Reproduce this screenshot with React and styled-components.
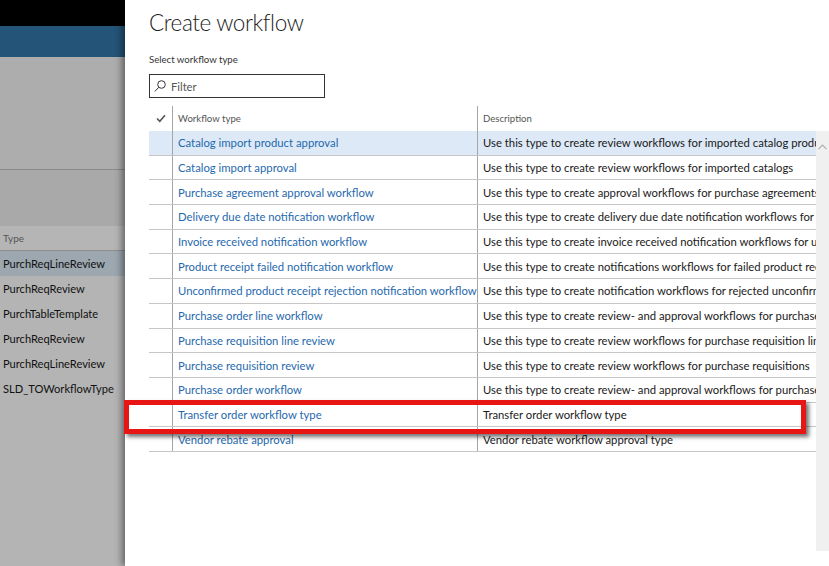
import React from 'react';
import styled, { createGlobalStyle } from 'styled-components';

const GlobalStyle = createGlobalStyle`
  html, body { margin: 0; padding: 0; }
  body {
    width: 829px;
    height: 566px;
    overflow: hidden;
    font-family: "Segoe UI", Lato, "Open Sans", sans-serif;
    background: #b4b4b4;
  }
`;

const Screen = styled.div`
  position: relative;
  display: flex;
  width: 829px;
  height: 566px;
  overflow: hidden;
`;

const Backdrop = styled.div`
  width: 125px;
  flex-shrink: 0;
  display: flex;
  flex-direction: column;
  background: #b4b4b4;
`;

const TopBar = styled.div`
  height: 26px;
  background: #000;
`;

const NavBar = styled.div`
  height: 31px;
  background: #245478;
`;

const GrayBlock = styled.div`
  height: ${p => p.h}px;
  background: ${p => p.bg};
  border-bottom: ${p => (p.line ? '1px solid #8a8a8a' : 'none')};
`;

const BackHeader = styled.div`
  height: 24px;
  line-height: 24px;
  padding-left: 3px;
  font-size: 10px;
  color: #555;
  background: #b5b5b5;
  border-bottom: 1px solid #8e8e8e;
`;

const BackRow = styled.div`
  height: 25px;
  line-height: 25px;
  padding-left: 3px;
  font-size: 11.1px;
  color: #111;
  white-space: nowrap;
  background: ${p => (p.selected ? '#9ca7b0' : 'transparent')};
`;

const Dialog = styled.div`
  flex: 1;
  min-width: 0;
  background: #fff;
  box-shadow: -3px 0 7px rgba(0, 0, 0, 0.45);
  padding: 6px 0 0 24px;
  display: flex;
  flex-direction: column;
  z-index: 1;
`;

const Title = styled.h1`
  margin: 0;
  font-size: 22.5px;
  font-weight: 300;
  letter-spacing: -0.4px;
  color: #222;
  line-height: 34px;
`;

const Label = styled.div`
  margin-top: 14px;
  font-size: 9.6px;
  color: #333;
  line-height: 12px;
`;

const FilterBox = styled.div`
  margin-top: 8px;
  width: 170px;
  height: 22px;
  border: 1px solid #333;
  display: flex;
  align-items: center;
  gap: 5px;
  padding-left: 4px;
  font-size: 11.2px;
  color: #555;
`;

const TableArea = styled.div`
  margin-top: 8px;
  display: flex;
  min-width: 0;
`;

const Table = styled.div`
  flex: 1;
  min-width: 0;
  overflow: hidden;
`;

const Row = styled.div`
  display: grid;
  grid-template-columns: 24px 305px 400px;
  height: ${p => (p.header ? 25 : 24.7)}px;
  box-sizing: border-box;
  border-bottom: ${p => (p.header ? 'none' : '1px solid #c6c6c6')};
  background: ${p => (p.active ? '#dde9f6' : 'transparent')};
`;

const CheckCell = styled.div`
  display: flex;
  align-items: center;
  justify-content: center;
  border-right: 1px solid #a6a6a6;
`;

const Cell = styled.div`
  padding-left: 5px;
  display: flex;
  align-items: center;
  white-space: nowrap;
  overflow: hidden;
  font-size: ${p => (p.header ? '9.6px' : '11.3px')};
  color: ${p => (p.header ? '#555' : p.link ? '#1f69ad' : '#1a1a1a')};
  border-right: ${p => (p.divider ? '1px solid #a6a6a6' : 'none')};
`;

const ScrollTrack = styled.div`
  width: 13px;
  flex-shrink: 0;
  margin-top: 25px;
  height: 420px;
  background: #f0f0f0;
  display: flex;
  justify-content: center;
  padding-top: 13px;
  box-sizing: border-box;
`;

const Highlight = styled.div`
  position: absolute;
  left: 124px;
  top: 400px;
  width: 672px;
  height: 24px;
  border: 5px solid #e81515;
  box-shadow: 3px 3px 4px rgba(0, 0, 0, 0.55);
  z-index: 2;
  pointer-events: none;
`;

const SearchIcon = () => (
  <svg width="12" height="13" viewBox="0 0 12 13" fill="none" stroke="#333" strokeWidth="1">
    <circle cx="7.5" cy="4.5" r="3.8" />
    <line x1="4.8" y1="7.3" x2="0.8" y2="11.5" />
  </svg>
);

const Check = () => (
  <svg width="10" height="9" viewBox="0 0 10 9" fill="none" stroke="#555" strokeWidth="1.6">
    <polyline points="1,4.5 3.8,7.3 9,1.2" />
  </svg>
);

const UpChevron = () => (
  <svg width="9" height="6" viewBox="0 0 9 6" fill="none" stroke="#b0b0b0" strokeWidth="1.2">
    <polyline points="0.5,5.2 4.5,1.2 8.5,5.2" />
  </svg>
);

const backRows = [
  'PurchReqLineReview',
  'PurchReqReview',
  'PurchTableTemplate',
  'PurchReqReview',
  'PurchReqLineReview',
  'SLD_TOWorkflowType',
];

const workflows = [
  ['Catalog import product approval', 'Use this type to create review workflows for imported catalog products'],
  ['Catalog import approval', 'Use this type to create review workflows for imported catalogs'],
  ['Purchase agreement approval workflow', 'Use this type to create approval workflows for purchase agreements'],
  ['Delivery due date notification workflow', 'Use this type to create delivery due date notification workflows for users'],
  ['Invoice received notification workflow', 'Use this type to create invoice received notification workflows for users'],
  ['Product receipt failed notification workflow', 'Use this type to create notifications workflows for failed product receipts'],
  ['Unconfirmed product receipt rejection notification workflow', 'Use this type to create notification workflows for rejected unconfirmed'],
  ['Purchase order line workflow', 'Use this type to create review- and approval workflows for purchase order lines'],
  ['Purchase requisition line review', 'Use this type to create review workflows for purchase requisition lines'],
  ['Purchase requisition review', 'Use this type to create review workflows for purchase requisitions'],
  ['Purchase order workflow', 'Use this type to create review- and approval workflows for purchase orders'],
  ['Transfer order workflow type', 'Transfer order workflow type'],
  ['Vendor rebate approval', 'Vendor rebate workflow approval type'],
];

const App = () => {
  return (
    <Screen>
      <GlobalStyle />
      <Backdrop>
        <TopBar />
        <NavBar />
        <GrayBlock h={112} bg="#adadad" line />
        <GrayBlock h={56} bg="#a9a9a9" />
        <BackHeader>Type</BackHeader>
        {backRows.map((r, i) => (
          <BackRow key={i} selected={i === 0}>{r}</BackRow>
        ))}
      </Backdrop>
      <Dialog>
        <Title>Create workflow</Title>
        <Label>Select workflow type</Label>
        <FilterBox>
          <SearchIcon />
          Filter
        </FilterBox>
        <TableArea>
          <Table>
            <Row header>
              <CheckCell><Check /></CheckCell>
              <Cell header divider>Workflow type</Cell>
              <Cell header>Description</Cell>
            </Row>
            {workflows.map(([name, desc], i) => (
              <Row key={i} active={i === 0}>
                <CheckCell />
                <Cell link divider>{name}</Cell>
                <Cell>{desc}</Cell>
              </Row>
            ))}
          </Table>
          <ScrollTrack>
            <UpChevron />
          </ScrollTrack>
        </TableArea>
      </Dialog>
      <Highlight />
    </Screen>
  );
};

export default App;
